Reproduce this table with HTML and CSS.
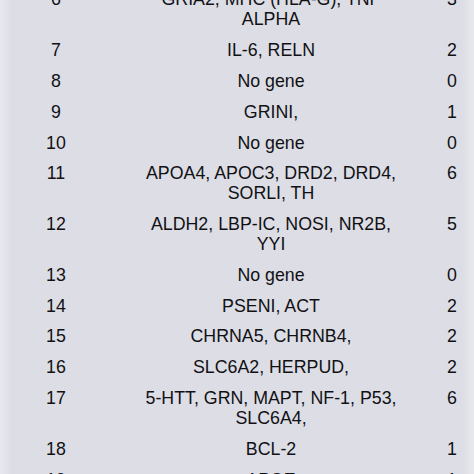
FILE: index.html
```html
<!DOCTYPE html>
<html>
<head>
<meta charset="utf-8">
<link rel="stylesheet" href="styles.css">
</head>
<body>
<div class="table">
  <div class="row"><div class="num">6</div><div class="genes">GRIA2, MHC (HLA-G), TNF ALPHA</div><div class="count">3</div></div>
  <div class="row"><div class="num">7</div><div class="genes">IL-6, RELN</div><div class="count">2</div></div>
  <div class="row"><div class="num">8</div><div class="genes">No gene</div><div class="count">0</div></div>
  <div class="row"><div class="num">9</div><div class="genes">GRINI,</div><div class="count">1</div></div>
  <div class="row"><div class="num">10</div><div class="genes">No gene</div><div class="count">0</div></div>
  <div class="row"><div class="num">11</div><div class="genes">APOA4, APOC3, DRD2, DRD4, SORLI, TH</div><div class="count">6</div></div>
  <div class="row"><div class="num">12</div><div class="genes">ALDH2, LBP-IC, NOSI, NR2B, YYI</div><div class="count">5</div></div>
  <div class="row"><div class="num">13</div><div class="genes">No gene</div><div class="count">0</div></div>
  <div class="row"><div class="num">14</div><div class="genes">PSENI, ACT</div><div class="count">2</div></div>
  <div class="row"><div class="num">15</div><div class="genes">CHRNA5, CHRNB4,</div><div class="count">2</div></div>
  <div class="row"><div class="num">16</div><div class="genes">SLC6A2, HERPUD,</div><div class="count">2</div></div>
  <div class="row"><div class="num">17</div><div class="genes">5-HTT, GRN, MAPT, NF-1, P53, SLC6A4,</div><div class="count">6</div></div>
  <div class="row"><div class="num">18</div><div class="genes">BCL-2</div><div class="count">1</div></div>
  <div class="row"><div class="num">19</div><div class="genes">APOE</div><div class="count">1</div></div>
</div>
</body>
</html>
```

FILE: styles.css
```css
html, body {
  margin: 0;
  padding: 0;
  width: 474px;
  height: 474px;
  overflow: hidden;
}
body {
  background: linear-gradient(to right, #e8e8ee 0px, #dddde6 12px, #dddde6 462px, #e8e8ee 474px);
  font-family: "Liberation Sans", Arial, sans-serif;
  font-size: 17.8px;
  line-height: 20px;
  color: #111114;
}
.table {
  margin-top: -16px;
  display: flex;
  flex-direction: column;
}
.row {
  display: grid;
  grid-template-columns: 112px 318px 44px;
}
.row > div {
  padding: 5.4px 0;
  text-align: center;
}
.row > .genes {
  padding-left: 30px;
  padding-right: 30px;
}
```
